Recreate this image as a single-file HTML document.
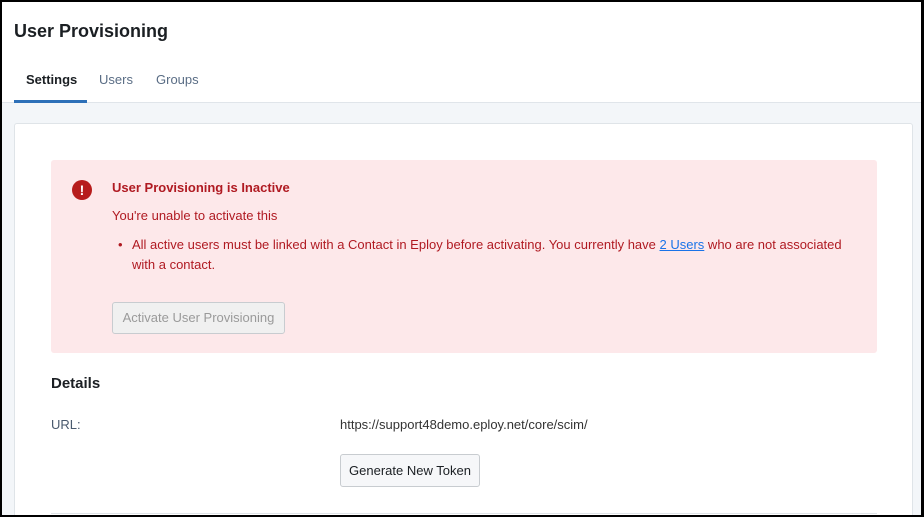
<!DOCTYPE html>
<html><head><style>
*{margin:0;padding:0;box-sizing:border-box}
body{width:924px;height:517px;overflow:hidden;font-family:"Liberation Sans",sans-serif;background:#000;position:relative}
.frame{position:absolute;left:2px;top:2px;width:919px;height:513px;background:#f3f6f9;overflow:hidden}
.head{position:absolute;left:0;top:0;width:919px;height:101px;background:#fff;border-bottom:1px solid #e0e5ea}
h1{position:absolute;left:12px;top:19px;font-size:18px;font-weight:bold;color:#1b1f23}
.tab{position:absolute;top:70px;font-size:13px;color:#5a6d85}
.ul{position:absolute;left:12px;top:98px;width:73px;height:3px;background:#2d70b8}
.card{position:absolute;left:12px;top:121px;width:899px;height:400px;background:#fff;border:1px solid #dfe4e8;border-radius:3px}
.alert{position:absolute;left:36px;top:36px;width:826px;height:193px;background:#fde8ea;border-radius:3px;color:#b01a22;font-size:13px}
.icon{position:absolute;left:21px;top:20px;width:20px;height:20px;border-radius:50%;background:#b71c1c;color:#fff;font-weight:bold;font-size:14px;text-align:center;line-height:20px}
.btn{position:absolute;border:1px solid #c8ccd0;border-radius:3px;font-size:13px;text-align:center}
</style></head><body><div class="frame">
<div class="head"><h1>User Provisioning</h1>
<div class="tab" style="left:24px;color:#1b1f23;font-weight:bold">Settings</div>
<div class="tab" style="left:97px">Users</div>
<div class="tab" style="left:154px">Groups</div>
<div class="ul"></div></div>
<div class="card">
<div class="alert">
<div class="icon">!</div>
<div style="position:absolute;left:61px;top:20px;font-weight:bold">User Provisioning is Inactive</div>
<div style="position:absolute;left:61px;top:48px">You're unable to activate this</div>
<div style="position:absolute;left:67px;top:75px;width:740px;line-height:20px;padding-left:14px">
<span style="position:absolute;left:0;top:0">•</span>All active users must be linked with a Contact in Eploy before activating. You currently have <span style="color:#1a73e8;text-decoration:underline">2 Users</span> who are not associated with a contact.</div>
<div class="btn" style="left:61px;top:142px;width:173px;height:32px;line-height:30px;background:#f0f0f0;color:#9a9a9a">Activate User Provisioning</div>
</div>
<div style="position:absolute;left:36px;top:251px;font-size:15px;font-weight:bold;color:#1b1f23">Details</div>
<div style="position:absolute;left:36px;top:293px;font-size:13px;color:#4a5a6e">URL:</div>
<div style="position:absolute;left:325px;top:293px;font-size:13px;color:#333">https://support48demo.eploy.net/core/scim/</div>
<div class="btn" style="left:325px;top:330px;width:140px;height:33px;line-height:31px;background:#f6f7f9;color:#1b1f23">Generate New Token</div>
<div style="position:absolute;left:36px;top:389px;width:826px;height:1px;background:#dfe4e8"></div>
</div>
</div></body></html>
